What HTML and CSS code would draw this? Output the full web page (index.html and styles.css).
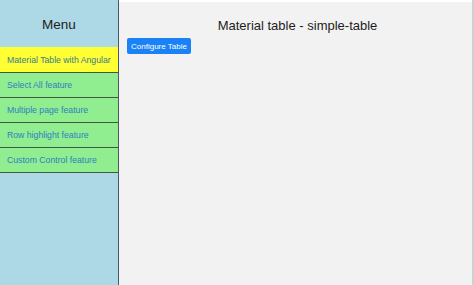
FILE: index.html
```html
<!DOCTYPE html>
<html>
<head>
<meta charset="utf-8">
<link rel="stylesheet" href="styles.css">
</head>
<body>
<div class="app">
  <aside class="sidebar">
    <h2 class="menu-title">Menu</h2>
    <nav class="menu">
      <a class="menu-item active">Material Table with Angular</a>
      <a class="menu-item">Select All feature</a>
      <a class="menu-item">Multiple page feature</a>
      <a class="menu-item">Row highlight feature</a>
      <a class="menu-item">Custom Control feature</a>
    </nav>
  </aside>
  <main class="content">
    <h1 class="page-title">Material table - simple-table</h1>
    <div class="toolbar"><button class="btn">Configure Table</button></div>
  </main>
  <div class="scroll-edge"></div>
</div>
</body>
</html>
```
FILE: styles.css
```css
html, body {
  margin: 0;
  padding: 0;
  height: 100%;
  background: #ffffff;
  font-family: "Liberation Sans", Arial, sans-serif;
}
.app {
  display: flex;
  height: 285px;
}
.sidebar {
  width: 118px;
  flex: none;
  background: #add8e6;
  border-right: 1px solid #4a5a60;
}
.menu-title {
  margin: 0;
  height: 47px;
  display: flex;
  align-items: center;
  justify-content: center;
  font-size: 13.5px;
  font-weight: normal;
  color: #1d1d1d;
  padding-top: 2px;
  box-sizing: border-box;
}
.menu {
  display: flex;
  flex-direction: column;
}
.menu-item {
  display: flex;
  align-items: center;
  height: 24px;
  padding-left: 7px;
  background: #90ee90;
  border-bottom: 1px solid #3f5a3f;
  font-size: 8.7px;
  color: #2f80c0;
  white-space: nowrap;
}
.menu-item.active {
  background: #ffff33;
  color: #3a7c8c;
  height: 25px;
}
.content {
  flex: 1;
  background: #f2f2f2;
  margin-top: 2px;
  padding: 0 8px;
}
.page-title {
  margin: 0;
  padding-top: 15px;
  line-height: 18px;
  text-align: center;
  font-size: 13px;
  font-weight: normal;
  color: #1d1d1d;
  padding-left: 4px;
}
.toolbar {
  display: flex;
  margin-top: 3px;
}
.btn {
  border: none;
  border-radius: 2px;
  background: #1a82f6;
  color: #ffffff;
  font-family: "Liberation Sans", Arial, sans-serif;
  font-size: 8px;
  height: 16px;
  padding: 0 4px;
}
.scroll-edge {
  width: 2px;
  background: #d0d0d0;
  flex: none;
}
```
